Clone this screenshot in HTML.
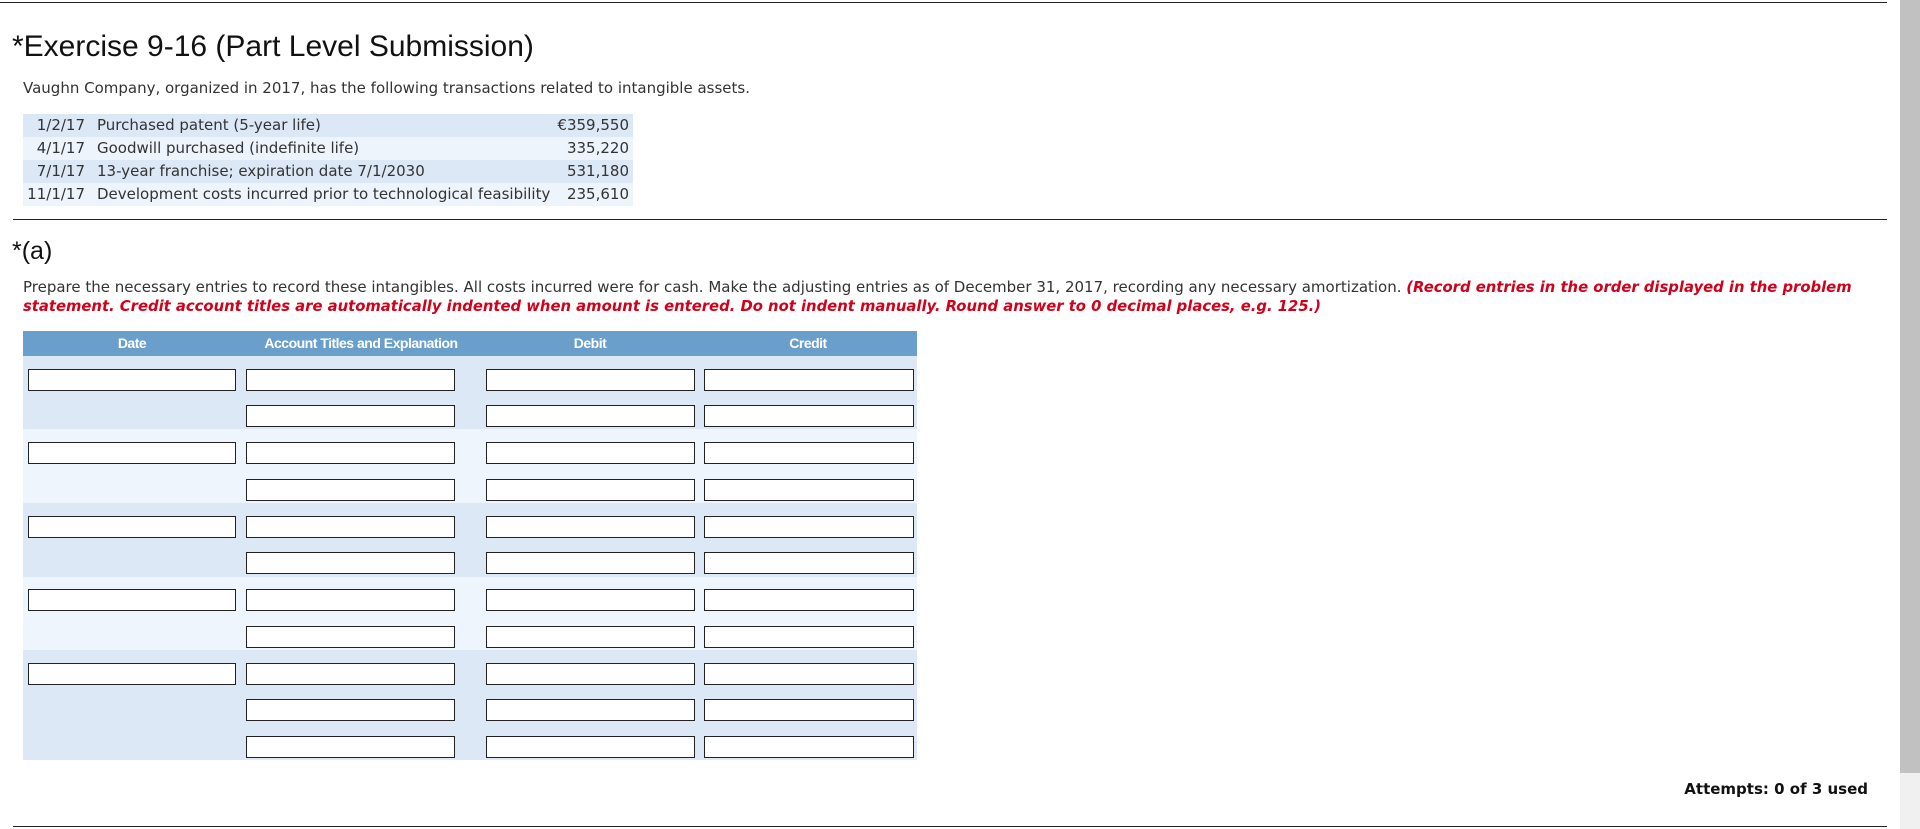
<!DOCTYPE html>
<html><head><meta charset="utf-8">
<style>
html,body{margin:0;padding:0;background:#fff;width:1920px;height:829px;overflow:hidden;position:relative;font-family:"DejaVu Sans","Liberation Sans",sans-serif;color:#222}
.abs{position:absolute}
.hl{position:absolute;height:1px;background:#222}
.tr{position:absolute;left:23px;width:610px;height:23px;font-size:15px;line-height:23px;color:#333}
.tr .d{position:absolute;right:548px;}
.tr .t{position:absolute;left:74px;}
.tr .a{position:absolute;right:4px;}
.g{position:absolute;left:23px;width:894px}
.in{position:absolute;height:20px;border:1px solid #222;background:#fff}
.hd{position:absolute;top:0;color:#fff;font-family:"Liberation Sans",sans-serif;font-weight:bold;font-size:14px;line-height:25px;letter-spacing:-0.5px;transform:translateX(-50%)}
</style></head><body>
<div class="hl" style="top:2px;left:0;width:1887px"></div>
<div class="abs" style="left:1900px;top:0;width:20px;height:773px;background:#c1c1c1"></div>
<div class="abs" style="left:1900px;top:773px;width:20px;height:56px;background:#f0f0f0"></div>

<div class="abs" style="left:12px;top:29px;font-family:'Liberation Sans',sans-serif;font-size:30px;line-height:36px;color:#111">*Exercise 9-16 (Part Level Submission)</div>
<div class="abs" style="left:23px;top:79px;font-size:15px;line-height:18px;color:#333">Vaughn Company, organized in 2017, has the following transactions related to intangible assets.</div>

<div class="tr" style="top:114px;background:#dde8f7"><span class="d">1/2/17</span><span class="t">Purchased patent (5-year life)</span><span class="a">€359,550</span></div>
<div class="tr" style="top:137px;background:#eef4fc"><span class="d">4/1/17</span><span class="t">Goodwill purchased (indefinite life)</span><span class="a">335,220</span></div>
<div class="tr" style="top:160px;background:#dde8f7"><span class="d">7/1/17</span><span class="t">13-year franchise; expiration date 7/1/2030</span><span class="a">531,180</span></div>
<div class="tr" style="top:183px;background:#eef4fc"><span class="d">11/1/17</span><span class="t">Development costs incurred prior to technological feasibility</span><span class="a">235,610</span></div>

<div class="hl" style="top:219px;left:13px;width:1874px"></div>
<div class="abs" style="left:12px;top:236px;font-family:'Liberation Sans',sans-serif;font-size:25px;line-height:30px;color:#111">*(a)</div>

<div class="abs" style="left:23px;top:278px;font-size:15px;line-height:18px;color:#333;white-space:nowrap">Prepare the necessary entries to record these intangibles. All costs incurred were for cash. Make the adjusting entries as of December 31, 2017, recording any necessary amortization. <b style="color:#d0021b;font-style:italic;font-size:14.8px">(Record entries in the order displayed in the problem<br>statement. Credit account titles are automatically indented when amount is entered. Do not indent manually. Round answer to 0 decimal places, e.g. 125.)</b></div>

<div class="abs" style="left:23px;top:331px;width:894px;height:25px;background:#6a9fcc">
<div class="hd" style="left:109px">Date</div>
<div class="hd" style="left:338px">Account Titles and Explanation</div>
<div class="hd" style="left:567px">Debit</div>
<div class="hd" style="left:785px">Credit</div>
</div>

<div class="g" style="top:356px;height:73px;background:#dde8f7"></div>
<div class="g" style="top:429px;height:74px;background:#eef5fd"></div>
<div class="g" style="top:503px;height:74px;background:#dde8f7"></div>
<div class="g" style="top:577px;height:73px;background:#eef5fd"></div>
<div class="g" style="top:650px;height:110px;background:#dde8f7"></div>

<div id="inputs"></div>
<script>
var rows=[[369,1],[405,0],[442,1],[479,0],[516,1],[552,0],[589,1],[626,0],[663,1],[699,0],[736,0]];
var h='';
rows.forEach(function(r){
 var y=r[0];
 if(r[1]) h+='<div class="in" style="left:28px;top:'+y+'px;width:206px"></div>';
 h+='<div class="in" style="left:246px;top:'+y+'px;width:207px"></div>';
 h+='<div class="in" style="left:486px;top:'+y+'px;width:207px"></div>';
 h+='<div class="in" style="left:704px;top:'+y+'px;width:208px"></div>';
});
document.getElementById('inputs').innerHTML=h;
</script>

<div class="abs" style="right:52px;top:779px;font-size:15px;font-weight:bold;line-height:20px;color:#111">Attempts: 0 of 3 used</div>
<div class="hl" style="top:826px;left:13px;width:1874px"></div>
</body></html>
